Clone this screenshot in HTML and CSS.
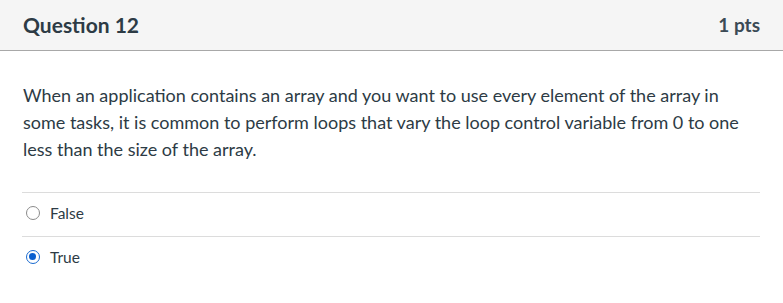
FILE: index.html
```html
<!DOCTYPE html>
<html>
<head>
<meta charset="utf-8">
<link rel="stylesheet" href="styles.css">
</head>
<body>
<div class="question">
  <div class="header">
    <span class="name">Question 12</span>
    <span class="pts">1 pts</span>
  </div>
  <div class="content">
    <p class="text">When an application contains an array and you want to use every element of the array in some tasks, it is common to perform loops that vary the loop control variable from 0 to one less than the size of the array.</p>
    <div class="answers">
      <div class="answer">
        <span class="radio"></span>
        <span class="label">False</span>
      </div>
      <div class="answer">
        <span class="radio checked"></span>
        <span class="label">True</span>
      </div>
    </div>
  </div>
</div>
</body>
</html>
```

FILE: styles.css
```css
html, body {
  margin: 0;
  padding: 0;
  background: #fff;
}
body {
  font-family: Lato, "Open Sans", sans-serif;
  color: #2d3b45;
}
.header {
  height: 51px;
  box-sizing: border-box;
  background: #f5f5f5;
  border-bottom: 1px solid #a8a8a8;
  display: flex;
  align-items: center;
  justify-content: space-between;
  padding: 0 23px 2px 23px;
}
.name {
  font-size: 21px;
  font-weight: 700;
}
.pts {
  font-size: 19px;
  font-weight: 700;
  color: #3b4a55;
}
.content {
  padding: 31px 23px 0 23px;
}
.text {
  margin: 0;
  font-size: 18px;
  line-height: 27px;
  width: 726px;
}
.answers {
  margin-top: 29px;
}
.answer {
  border-top: 1px solid #dcdcdc;
  height: 44px;
  box-sizing: border-box;
  display: flex;
  align-items: center;
  gap: 10px;
  padding-left: 4px;
  padding-bottom: 3px;
  width: 738px;
  margin-left: -1px;
  font-size: 15.5px;
}
.radio {
  width: 14px;
  height: 14px;
  box-sizing: border-box;
  border: 1px solid #8b8b8b;
  border-radius: 50%;
  background: #fff;
  position: relative;
}
.radio.checked {
  border: 1.5px solid #1a6bd0;
}
.radio.checked::after {
  content: "";
  position: absolute;
  left: 2px;
  top: 2px;
  width: 7px;
  height: 7px;
  border-radius: 50%;
  background: #0a5fcf;
}
.label {
  color: #2d3b45;
}
```
